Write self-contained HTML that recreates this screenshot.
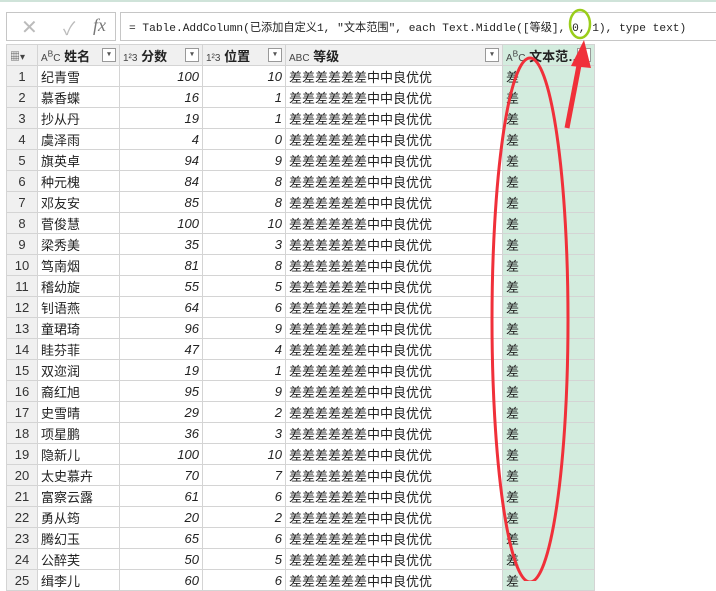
<!DOCTYPE html><html><head><meta charset="utf-8"><style>
body{margin:0;width:716px;height:581px;overflow:hidden;background:#fff;font-family:"Liberation Sans","Noto Sans CJK SC",sans-serif;position:relative}
.top{position:absolute;left:0;top:0;width:716px;height:2px;background:#cfe3d9}
.fbox{position:absolute;top:12px;height:27px;border:1px solid #c6c6c6;background:#fff;overflow:hidden}
table{position:absolute;left:6px;top:44px;border-collapse:collapse;font-size:13px;color:#222;table-layout:fixed}
td{border:1px solid #d4d4d4;height:20px;padding:0 3px;white-space:nowrap;overflow:hidden}
th{border:1px solid #d4d4d4;height:20px;background:#f0f0f0;font-weight:bold;text-align:left;padding:0 3px;font-size:13px;position:relative;white-space:nowrap;overflow:hidden}
td.n{background:#f0f0f0;text-align:center;color:#333}
td.r{text-align:right;font-style:italic}
td.g,th.g{background:#d3ecde}
.dd{position:absolute;right:3px;top:3px;width:12px;height:12px;border:1px solid #999;background:#fff;font-size:7px;text-align:center;line-height:12px;color:#555}
.t{font-weight:normal;font-size:10px;color:#444}
</style></head><body>
<div class="top"></div>
<div class="fbox" style="left:6px;width:108px"><span style="position:absolute;left:14px;top:2px;font-size:20px;color:#bbb">✕</span><span style="position:absolute;left:56px;top:2px;font-size:18px;color:#bbb">✓</span><span style="position:absolute;left:86px;top:2px;font-size:18px;font-style:italic;font-family:'Liberation Serif',serif;color:#777">fx</span></div>
<div class="fbox" style="left:120px;width:600px;border-right:none"><div style="position:absolute;left:8px;top:6px;font-family:'Liberation Mono','Noto Sans CJK SC',monospace;font-size:11.2px;color:#222;white-space:nowrap">= Table.AddColumn(已添加自定义1, "文本范围", each Text.Middle([等级], 0, 1), type text)</div></div>
<table>
<col style="width:31px"><col style="width:82px"><col style="width:83px"><col style="width:83px"><col style="width:217px"><col style="width:92px">
<tr><th><span class="t">▦▾</span></th><th><span class="t">A<sup>B</sup>C</span> 姓名<span class="dd">▾</span></th><th><span class="t">1²3</span> 分数<span class="dd">▾</span></th><th><span class="t">1²3</span> 位置<span class="dd">▾</span></th><th><span class="t">ABC</span> 等级<span class="dd">▾</span></th><th class="g"><span class="t">A<sup>B</sup>C</span> 文本范…<span class="dd">▾</span></th></tr>
<script>
var d=[["纪青雪",100,10],["慕香蝶",16,1],["抄从丹",19,1],["虞泽雨",4,0],["旗英卓",94,9],["种元槐",84,8],["邓友安",85,8],["菅俊慧",100,10],["梁秀美",35,3],["笃南烟",81,8],["稽幼旋",55,5],["钊语燕",64,6],["童珺琦",96,9],["眭芬菲",47,4],["双迩润",19,1],["裔红旭",95,9],["史雪晴",29,2],["项星鹏",36,3],["隐新儿",100,10],["太史慕卉",70,7],["富察云露",61,6],["勇从筠",20,2],["腾幻玉",65,6],["公醉芙",50,5],["缉李儿",60,6]];
var h="";d.forEach(function(r,i){h+='<tr><td class="n">'+(i+1)+'</td><td>'+r[0]+'</td><td class="r">'+r[1]+'</td><td class="r">'+r[2]+'</td><td>差差差差差差中中良优优</td><td class="g">差</td></tr>'});document.write(h);
</script>
</table>
<svg style="position:absolute;left:0;top:0" width="716" height="581">
<ellipse cx="530" cy="320" rx="38" ry="262" fill="none" stroke="#f0303a" stroke-width="3"/>
<ellipse cx="580" cy="24" rx="10" ry="14" fill="none" stroke="#9acd1a" stroke-width="2.5"/>
<line x1="567" y1="128" x2="580" y2="60" stroke="#f0303a" stroke-width="5"/>
<polygon points="584,40 571,66 591,68" fill="#f0303a"/>
</svg>
</body></html>
